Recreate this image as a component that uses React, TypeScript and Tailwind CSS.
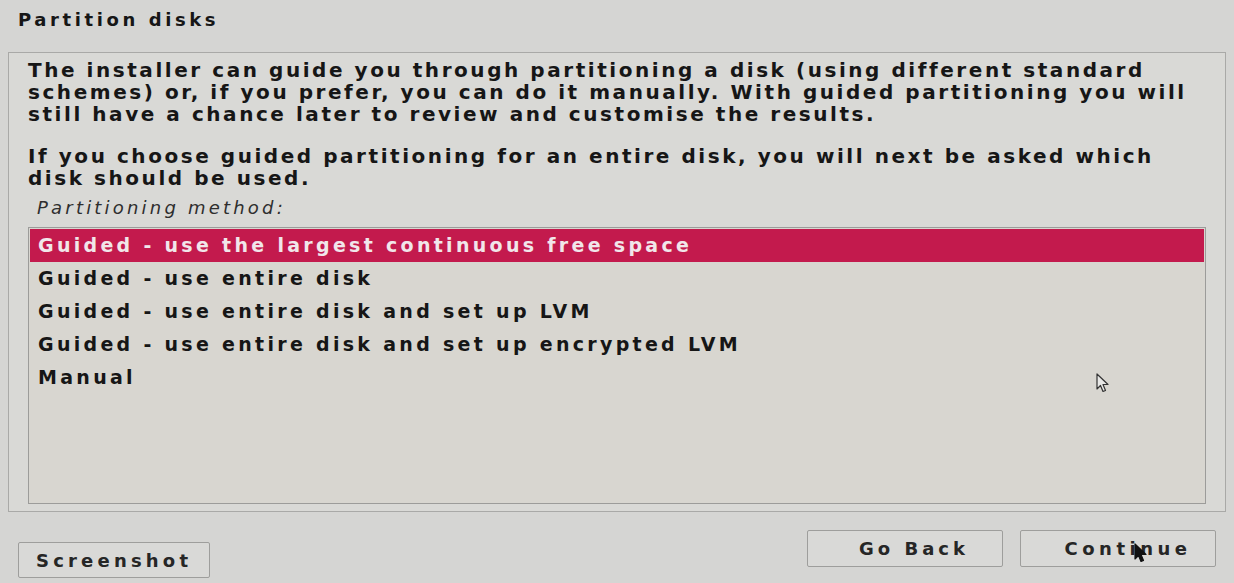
import React from 'react';

const options = [
  'Guided - use the largest continuous free space',
  'Guided - use entire disk',
  'Guided - use entire disk and set up LVM',
  'Guided - use entire disk and set up encrypted LVM',
  'Manual',
];

function Cursor({ outline }: { outline?: boolean }) {
  return (
    <svg width="14" height="20" viewBox="0 0 14 20">
      <path
        d="M1 1 L1 16 L4.5 12.5 L7 18.5 L9.5 17.5 L7 11.5 L12 11.5 Z"
        fill={outline ? '#e8e8e6' : '#111'}
        stroke={outline ? '#333' : '#111'}
        strokeWidth="1.2"
        strokeLinejoin="round"
      />
    </svg>
  );
}

export default function App() {
  const selected = 0;

  return (
    <div
      className="relative w-[1234px] h-[583px] overflow-hidden bg-[#d5d5d3] text-[#161616]"
      style={{ fontFamily: '"DejaVu Sans", "Liberation Sans", sans-serif' }}
    >
      <div className="px-[18px] pt-[6px] h-[44px] text-[18px] font-bold tracking-[3.6px]">
        Partition disks
      </div>

      <div className="mx-[8px] mt-[8px] h-[460px] border border-[#a9a9a7] bg-[#d9d9d6] px-[19px] pt-[6px]">
        <p className="text-[20px] font-bold leading-[22px] tracking-[2.55px]">
          The installer can guide you through partitioning a disk (using different standard
          <br />
          schemes) or, if you prefer, you can do it manually. With guided partitioning you will
          <br />
          still have a chance later to review and customise the results.
        </p>
        <p className="mt-[20px] text-[20px] font-bold leading-[22px] tracking-[2.55px]">
          If you choose guided partitioning for an entire disk, you will next be asked which
          <br />
          disk should be used.
        </p>
        <div className="mt-[8px] pl-[9px] text-[18px] italic leading-[22px] tracking-[3.2px] text-[#2e2e2e]">
          Partitioning method:
        </div>

        <div className="mt-[8px] h-[277px] border border-[#9c9c9a] bg-[#d8d6d0] p-[1px]">
          {options.map((o, i) => (
            <div
              key={o}
              className={
                i === selected
                  ? 'h-[33px] bg-[#c31a4d] px-[8px] text-[19px] font-bold leading-[33px] tracking-[3.3px] text-[#f1e6ea]'
                  : 'h-[33px] px-[8px] text-[19px] font-bold leading-[33px] tracking-[3.3px]'
              }
            >
              {o}
            </div>
          ))}
        </div>
      </div>

      <div className="flex items-start px-[18px] pt-[18px]">
        <button className="mt-[12px] h-[36px] w-[192px] rounded-[2px] border border-[#9e9e9c] bg-[#d9d9d7] text-left pl-[17px] text-[18px] font-bold tracking-[4.2px] text-[#262626]">
          Screenshot
        </button>
        <div className="flex-1" />
        <button className="h-[37px] w-[196px] rounded-[2px] border border-[#9e9e9c] bg-[#d9d9d7] pl-[18px] text-[18px] font-bold tracking-[4px] text-[#262626]">
          Go Back
        </button>
        <button className="ml-[17px] h-[37px] w-[196px] rounded-[2px] border border-[#9e9e9c] bg-[#d9d9d7] pl-[20px] text-[18px] font-bold tracking-[4.5px] text-[#262626]">
          Continue
        </button>
      </div>

      <div className="absolute left-[1096px] top-[373px]">
        <Cursor outline />
      </div>
      <div className="absolute left-[1134px] top-[543px]">
        <Cursor />
      </div>
    </div>
  );
}
